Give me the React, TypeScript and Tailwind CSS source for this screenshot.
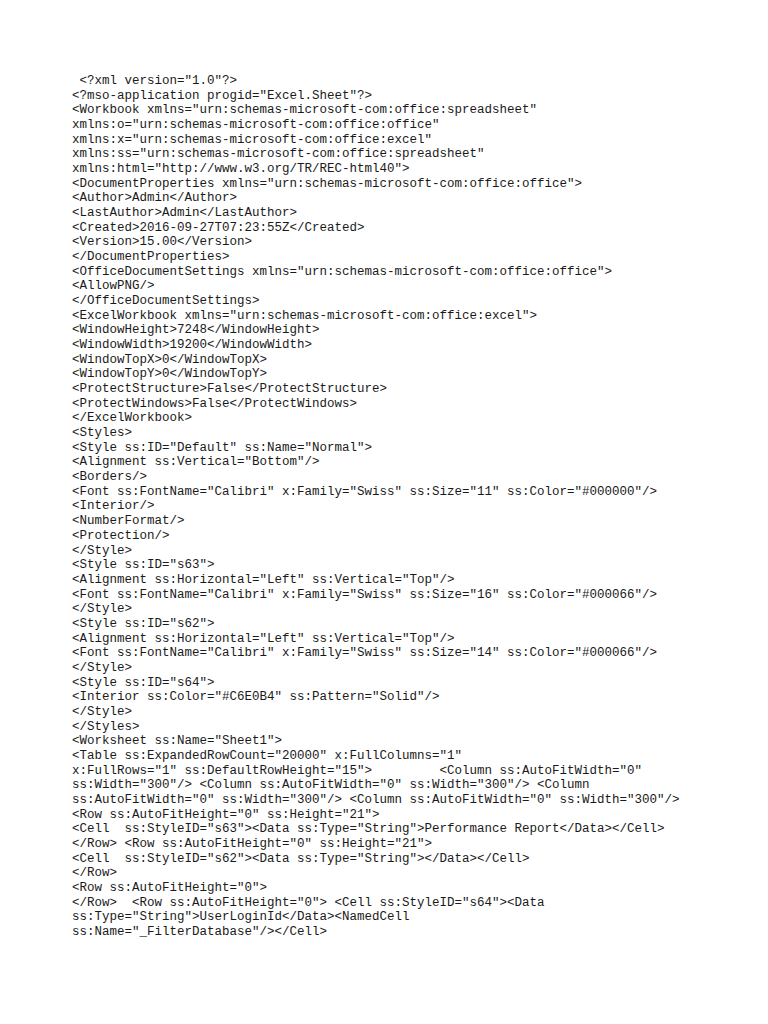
const lines: string[] = [
  ' <?xml version="1.0"?>',
  '<?mso-application progid="Excel.Sheet"?>',
  '<Workbook xmlns="urn:schemas-microsoft-com:office:spreadsheet"',
  'xmlns:o="urn:schemas-microsoft-com:office:office"',
  'xmlns:x="urn:schemas-microsoft-com:office:excel"',
  'xmlns:ss="urn:schemas-microsoft-com:office:spreadsheet"',
  'xmlns:html="http://www.w3.org/TR/REC-html40">',
  '<DocumentProperties xmlns="urn:schemas-microsoft-com:office:office">',
  '<Author>Admin</Author>',
  '<LastAuthor>Admin</LastAuthor>',
  '<Created>2016-09-27T07:23:55Z</Created>',
  '<Version>15.00</Version>',
  '</DocumentProperties>',
  '<OfficeDocumentSettings xmlns="urn:schemas-microsoft-com:office:office">',
  '<AllowPNG/>',
  '</OfficeDocumentSettings>',
  '<ExcelWorkbook xmlns="urn:schemas-microsoft-com:office:excel">',
  '<WindowHeight>7248</WindowHeight>',
  '<WindowWidth>19200</WindowWidth>',
  '<WindowTopX>0</WindowTopX>',
  '<WindowTopY>0</WindowTopY>',
  '<ProtectStructure>False</ProtectStructure>',
  '<ProtectWindows>False</ProtectWindows>',
  '</ExcelWorkbook>',
  '<Styles>',
  '<Style ss:ID="Default" ss:Name="Normal">',
  '<Alignment ss:Vertical="Bottom"/>',
  '<Borders/>',
  '<Font ss:FontName="Calibri" x:Family="Swiss" ss:Size="11" ss:Color="#000000"/>',
  '<Interior/>',
  '<NumberFormat/>',
  '<Protection/>',
  '</Style>',
  '<Style ss:ID="s63">',
  '<Alignment ss:Horizontal="Left" ss:Vertical="Top"/>',
  '<Font ss:FontName="Calibri" x:Family="Swiss" ss:Size="16" ss:Color="#000066"/>',
  '</Style>',
  '<Style ss:ID="s62">',
  '<Alignment ss:Horizontal="Left" ss:Vertical="Top"/>',
  '<Font ss:FontName="Calibri" x:Family="Swiss" ss:Size="14" ss:Color="#000066"/>',
  '</Style>',
  '<Style ss:ID="s64">',
  '<Interior ss:Color="#C6E0B4" ss:Pattern="Solid"/>',
  '</Style>',
  '</Styles>',
  '<Worksheet ss:Name="Sheet1">',
  '<Table ss:ExpandedRowCount="20000" x:FullColumns="1"',
  'x:FullRows="1" ss:DefaultRowHeight="15">         <Column ss:AutoFitWidth="0"',
  'ss:Width="300"/> <Column ss:AutoFitWidth="0" ss:Width="300"/> <Column',
  'ss:AutoFitWidth="0" ss:Width="300"/> <Column ss:AutoFitWidth="0" ss:Width="300"/>',
  '<Row ss:AutoFitHeight="0" ss:Height="21">',
  '<Cell  ss:StyleID="s63"><Data ss:Type="String">Performance Report</Data></Cell>',
  '</Row> <Row ss:AutoFitHeight="0" ss:Height="21">',
  '<Cell  ss:StyleID="s62"><Data ss:Type="String"></Data></Cell>',
  '</Row>',
  '<Row ss:AutoFitHeight="0">',
  '</Row>  <Row ss:AutoFitHeight="0"> <Cell ss:StyleID="s64"><Data',
  'ss:Type="String">UserLoginId</Data><NamedCell',
  'ss:Name="_FilterDatabase"/></Cell>',
];

export default function App() {
  return (
    <div className="w-[768px] h-[1024px] bg-white overflow-hidden pl-[72px] pt-[74px]">
      <div className="font-['Liberation_Mono',monospace] text-[12.5px] leading-[14.68px] text-[#1a1a1a] whitespace-pre">
        {lines.map((l, i) => (
          <div key={i} className="h-[14.68px]">{l}</div>
        ))}
      </div>
    </div>
  );
}
